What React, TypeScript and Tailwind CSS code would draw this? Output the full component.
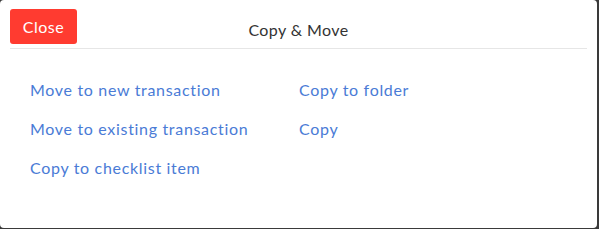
import React from "react";

export default function App() {
  const link = "text-[16px] tracking-[0.68px] text-[#4a7bd6] leading-none whitespace-nowrap";
  return (
    <div className="w-[599px] h-[229px] bg-[#3a3a3a] overflow-hidden" style={{ fontFamily: "Lato, 'Open Sans', sans-serif" }}>
      <div className="w-[597px] h-[228px] bg-white rounded-[4px] flex flex-col">
        <div className="relative h-[49px] mx-[10px] border-b border-[#e6e6e6] flex items-center justify-center">
          <button className="absolute left-0 top-[9px] w-[67px] h-[35px] bg-[#ff3b30] rounded-[3px] text-white text-[16px] tracking-[0.5px] leading-none flex items-center justify-center">
            Close
          </button>
          <span className="text-[16px] tracking-[0.4px] text-[#333] mt-[12px]">Copy &amp; Move</span>
        </div>
        <div className="grid grid-cols-[269px_1fr] pl-[30px] pt-[33px] gap-y-[23px]">
          <span className={link}>Move to new transaction</span>
          <span className={link}>Copy to folder</span>
          <span className={link}>Move to existing transaction</span>
          <span className={link}>Copy</span>
          <span className={link}>Copy to checklist item</span>
          <span></span>
        </div>
      </div>
    </div>
  );
}
